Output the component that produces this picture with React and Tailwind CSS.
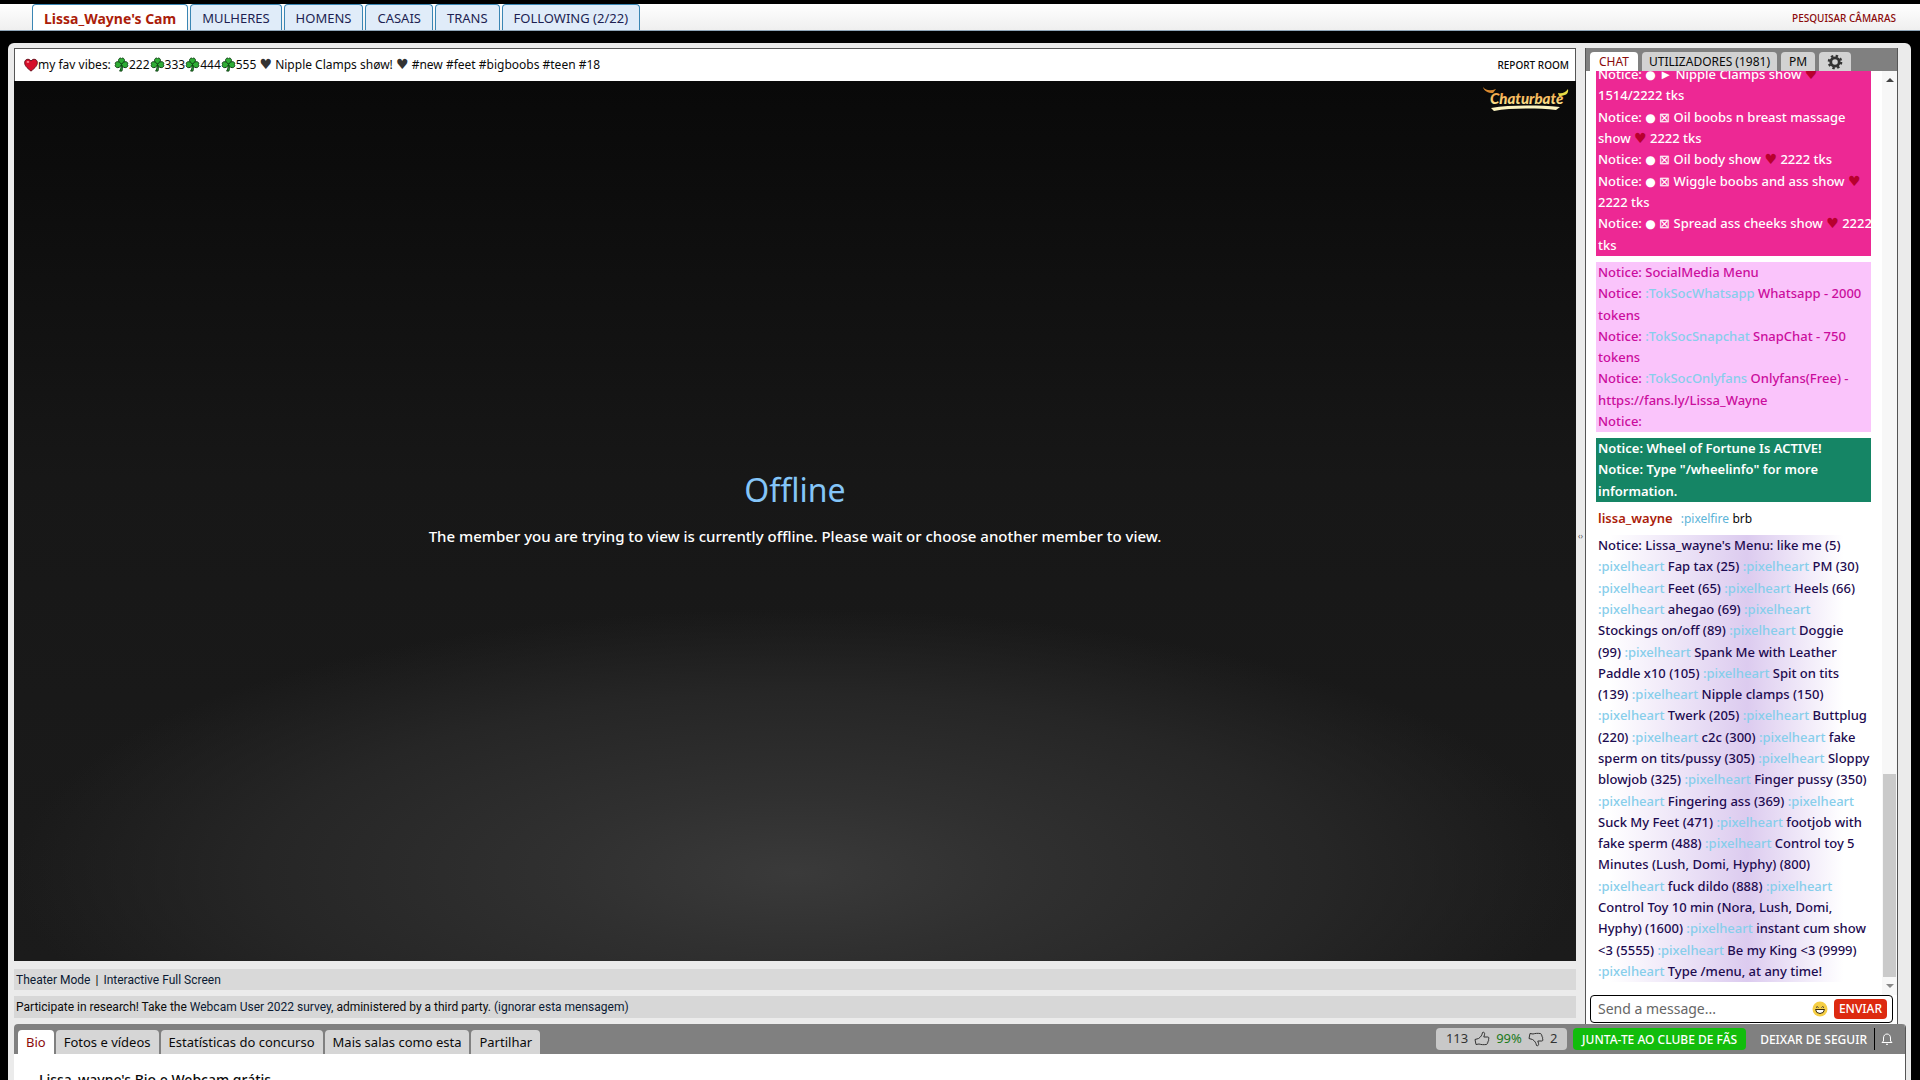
import React, { useState } from 'react';

const mainTabs = ['MULHERES', 'HOMENS', 'CASAIS', 'TRANS', 'FOLLOWING (2/22)'];
const bioTabs = ['Bio', 'Fotos e vídeos', 'Estatísticas do concurso', 'Mais salas como esta', 'Partilhar'];

const pinkLines = [
  'Notice: ● ► Nipple Clamps show ♥',
  '1514/2222 tks',
  'Notice: ● ⊠ Oil boobs n breast massage',
  'show ♥ 2222 tks',
  'Notice: ● ⊠ Oil body show ♥ 2222 tks',
  'Notice: ● ⊠ Wiggle boobs and ass show ♥',
  '2222 tks',
  'Notice: ● ⊠ Spread ass cheeks show ♥ 2222',
  'tks',
];

const socialLines = [
  'Notice: SocialMedia Menu',
  'Notice: :TokSocWhatsapp Whatsapp - 2000',
  'tokens',
  'Notice: :TokSocSnapchat SnapChat - 750',
  'tokens',
  'Notice: :TokSocOnlyfans Onlyfans(Free) -',
  'https://fans.ly/Lissa_Wayne',
  'Notice:',
];

const wheelLines = [
  'Notice: Wheel of Fortune Is ACTIVE!',
  'Notice: Type "/wheelinfo" for more',
  'information.',
];

const menuLines = [
  "Notice: Lissa_wayne's Menu: like me (5)",
  ':pixelheart Fap tax (25) :pixelheart PM (30)',
  ':pixelheart Feet (65) :pixelheart Heels (66)',
  ':pixelheart ahegao (69) :pixelheart',
  'Stockings on/off (89) :pixelheart Doggie',
  '(99) :pixelheart Spank Me with Leather',
  'Paddle x10 (105) :pixelheart Spit on tits',
  '(139) :pixelheart Nipple clamps (150)',
  ':pixelheart Twerk (205) :pixelheart Buttplug',
  '(220) :pixelheart c2c (300) :pixelheart fake',
  'sperm on tits/pussy (305) :pixelheart Sloppy',
  'blowjob (325) :pixelheart Finger pussy (350)',
  ':pixelheart Fingering ass (369) :pixelheart',
  'Suck My Feet (471) :pixelheart footjob with',
  'fake sperm (488) :pixelheart Control toy 5',
  'Minutes (Lush, Domi, Hyphy) (800)',
  ':pixelheart fuck dildo (888) :pixelheart',
  'Control Toy 10 min (Nora, Lush, Domi,',
  'Hyphy) (1600) :pixelheart instant cum show',
  '<3 (5555) :pixelheart Be my King <3 (9999)',
  ':pixelheart Type /menu, at any time!',
];

// emoticon codes are light blue, hearts are red
const ChatLine = ({ text }) => (
  <p className="flex items-center whitespace-pre">
    <span>
      {text.split(/(:pixelheart|:TokSoc\w+|♥|●)/).map((part, i) => {
        if (part === '♥') return <span key={i} className="font-['DejaVu_Sans',sans-serif] text-sm leading-none font-normal text-[#b8002e]">♥</span>;
        if (part === '●') return <span key={i} className="font-['DejaVu_Sans',sans-serif] text-xs leading-none font-normal">●</span>;
        if (part[0] === ':' && part.length > 2) return <span key={i} className="text-[#87ceeb]">{part}</span>;
        return part;
      })}
    </span>
  </p>
);

const ChatBlock = ({ lines, className }) => (
  <div className={`grid auto-rows-fr shrink-0 pl-[2px] ${className}`}>
    {lines.map((line, i) => <ChatLine key={i} text={line} />)}
  </div>
);

const Clover = () => (
  <svg className="inline-block h-[15px] w-[15px] align-[-3px]" viewBox="0 0 16 16">
    <g fill="#2fae35" stroke="#0b3d10" strokeWidth="1">
      <path d="M7.5 9c0 3-.5 4.500-1.500 6h2.500c.6-2 .6-4 .3-6z" />
      <path d="M8 7.500C5 6 4 3.500 5.500 1.800 6.500.8 7.500 1 8 1.800c.5-.8 1.500-1 2.500 0C12 3.500 11 6 8 7.500z" />
      <path d="M8 8c-1 3-3.500 4-5.500 3C1 10 1 9 1.800 8.200 1 7.200 1.200 5.800 2.600 5.200 4.800 4.500 6.800 5.500 8 8z" />
      <path d="M8 8c1 3 3.500 4 5.500 3 1.500-1 1.500-2 .7-2.800.8-1 .6-2.400-.8-3C11.200 4.500 9.200 5.500 8 8z" />
    </g>
  </svg>
);

const RedHeart = () => (
  <svg className="inline-block h-[14px] w-[14px] align-[-3px]" viewBox="0 0 16 16">
    <path d="M8 15C3 11 .7 8.500.7 5.200.7 1.500 5.500-.2 8 3.500c2.500-3.700 7.300-2 7.300 1.700C15.300 8.500 13 11 8 15z" fill="#d6102b" stroke="#5c0612" />
    <ellipse cx="4.500" cy="4.500" rx="1.500" ry="1" fill="#ff8d98" />
  </svg>
);

const DarkHeart = () => (
  <span className="font-['DejaVu_Sans',sans-serif] text-sm leading-none text-[#333]">♥</span>
);

const Logo = () => (
  <svg className="h-[28px] w-[88px]" viewBox="0 0 88 28">
    <defs>
      <linearGradient id="gold" x1="0" y1="0" x2="0" y2="1">
        <stop offset="0" stopColor="#ef8a2b" />
        <stop offset="1" stopColor="#fdf6a0" />
      </linearGradient>
    </defs>
    <path d="M1 2c3 4 8 4 13 2l-3 4C6 8 2 6 1 2z" fill="#d9892f" />
    <path d="M76 8c4 1 7 0 10-4 1 5-3 7-9 7z" fill="#e8dc45" />
    <path d="M9 23c20-3 45-3 69-1l-4 3c-20-2-45-2-62 1z" fill="#fbf3c0" />
    <text x="8" y="19" fontFamily="Lato" fontStyle="italic" fontWeight="900" fontSize="15" fill="url(#gold)">Chaturbate</text>
  </svg>
);

const thumbPath = 'M1 8.500 4.500 7.500C7 6 8 4 8.500 1.500c1.500-.8 2.500.5 2 2.200L9.800 6h4c1.600.2 1.500 1.900.3 2.100 1 .4.900 1.800-.3 2 .7.500.5 1.700-.6 1.800.4.700 0 1.600-1 1.600-2.500.3-5 .2-7.200-.5L2 13.500z';

const Thumb = ({ down }) => (
  <svg className={`h-4 w-4 ${down ? '-scale-y-100' : ''}`} viewBox="0 0 16 16" fill="none" stroke="#333" strokeWidth="1">
    <path d={thumbPath} />
  </svg>
);

const App = () => {
  const [message, setMessage] = useState('');
  const [activeTab, setActiveTab] = useState('Bio');

  return (
    <div className="flex h-screen flex-col overflow-hidden bg-black pt-1 font-['Noto_Sans',sans-serif] text-[#0a0a0a]">
      {/* Top navigation */}
      <nav className="flex h-[27px] shrink-0 items-end justify-between border-b border-[#8fa5b8] bg-linear-to-b from-white to-[#efefef] pr-6 pl-8">
        <div className="flex h-full gap-[2px] text-[13px]">
          <a href="#cam" className="flex items-center rounded-t border border-b-0 border-[#3a86b4] bg-white px-[11px] pt-[2px] text-sm font-bold text-[#ab1d0a]">
            Lissa_Wayne's Cam
          </a>
          {mainTabs.map((tab) => (
            <a key={tab} href="#tab" className="flex items-center rounded-t border border-b-0 border-[#3a86b4] bg-[#e0ecf9] px-[11px] pt-[2px] text-[#1d1f52]">
              {tab}
            </a>
          ))}
        </div>
        <a href="#search" className="self-center pt-[2px] text-[10px] font-medium text-[#8b0a0a]">PESQUISAR CÂMARAS</a>
      </nav>

      <main className="mt-3 mr-[9px] ml-2 flex min-h-0 flex-1 flex-col rounded-t-md bg-[#ebebeb] pt-[5px] pr-[5px] pl-[6px]">
        <div className="flex min-h-0 flex-1">
          {/* Room */}
          <section className="flex min-w-0 flex-1 flex-col">
            <div className="flex h-[33px] shrink-0 items-center justify-between border border-b-0 border-[#555] bg-white pr-[6px] pl-[9px]">
              <h1 className="text-xs leading-5">
                <RedHeart />my fav vibes: <Clover />222<Clover />333<Clover />444<Clover />555 <DarkHeart /> Nipple Clamps shøw! <DarkHeart /> #new #feet #bigboobs #teen #18
              </h1>
              <a href="#report" className="text-[10px] font-medium">REPORT ROOM</a>
            </div>
            <div className="relative flex flex-1 flex-col items-center justify-center bg-[radial-gradient(ellipse_50%_30%_at_50%_90%,#3a3a3a,#303030_30%,#262626_68%,transparent),linear-gradient(#090909,#171717_45%,#191919_70%,#1b1b1b)] pb-6">
              <div className="absolute top-1 right-[6px]">
                <Logo />
              </div>
              <h2 className="text-[32px] leading-10 text-[#84c5f8]">Offline</h2>
              <p className="mt-[14px] text-[15px] leading-6 font-medium text-white">
                The member you are trying to view is currently offline. Please wait or choose another member to view.
              </p>
            </div>
            <div className="mt-2 flex h-[21px] shrink-0 items-center gap-[5px] bg-[#d9d9d9] px-[2px] font-[Roboto,sans-serif] text-xs">
              <a href="#theater" className="text-[#0b1a33]">Theater Mode</a>|<a href="#full" className="text-[#0b1a33]">Interactive Full Screen</a>
            </div>
            <p className="mt-[6px] mb-[6px] flex h-[22px] shrink-0 items-center bg-[#d7d7d7] px-[2px] font-[Roboto,sans-serif] text-xs whitespace-pre">
              Participate in research! Take the <a href="#survey" className="text-[#0b1a33]">Webcam User 2022 survey,</a> administered by a third party. <a href="#ignore" className="text-[#0b1a33]">(ignorar esta mensagem)</a>
            </p>
          </section>

          <div className="flex w-[9px] shrink-0 items-center justify-center text-[8px] text-[#555]">‹›</div>

          {/* Chat */}
          <aside className="mr-2 flex w-[313px] shrink-0 flex-col border-x border-[#555] bg-white">
            <div className="flex h-[23px] shrink-0 items-end gap-1 bg-[#808080] pl-1 text-xs">
              <button className="h-[19px] rounded-t bg-white px-[9px] text-[#8b0a0a]">CHAT</button>
              <button className="h-[19px] rounded-t bg-[#d2d2d2] px-[7px]">UTILIZADORES (1981)</button>
              <button className="h-[19px] rounded-t bg-[#d2d2d2] px-2">PM</button>
              <button className="flex h-[19px] items-center rounded-t bg-[#d2d2d2] px-2" aria-label="Settings">
                <svg className="h-4 w-4" viewBox="0 0 16 16">
                  <circle cx="8" cy="8" r="4.200" fill="none" stroke="#333" strokeWidth="2.800" />
                  <circle cx="8" cy="8" r="6.200" fill="none" stroke="#333" strokeWidth="2.200" strokeDasharray="2.430 2.430" />
                </svg>
              </button>
            </div>
            <div className="flex min-h-0 flex-1">
              <div className="flex min-w-0 flex-1 flex-col justify-end gap-[6px] overflow-hidden pb-[13px] pl-[10px] text-[13px] leading-[21px]">
                <ChatBlock lines={pinkLines} className="h-[192px] bg-[#ed2894] font-medium text-white" />
                <ChatBlock lines={socialLines} className="h-[170px] bg-[#fac4fb] font-medium text-[#cb0d9d]" />
                <ChatBlock lines={wheelLines} className="h-16 bg-[#158565] font-semibold text-white" />
                <p className="pl-[2px]">
                  <span className="font-semibold text-[#ab1d0a]">lissa_wayne</span>
                  <span className="ml-2 text-xs text-[#5db4d8]">:pixelfire</span> <span className="text-xs">brb</span>
                </p>
                <ChatBlock lines={menuLines} className="h-[447px] bg-linear-to-r from-white from-5% via-[#dccbef] via-55% to-white to-90% font-medium text-[#1d0b50]" />
              </div>
              <div className="ml-[11px] flex w-[15px] shrink-0 flex-col items-center bg-[#f7f7f7] py-[7px]">
                <svg className="h-1 w-2" viewBox="0 0 8 4"><path d="M0 4 4 0l4 4z" fill="#444" /></svg>
                <div className="mt-auto mb-[7px] h-[203px] w-[13px] bg-[#cacaca]" />
                <svg className="h-1 w-2" viewBox="0 0 8 4"><path d="M0 0h8L4 4z" fill="#888" /></svg>
              </div>
            </div>
            <form className="mx-1 mb-px flex h-7 shrink-0 items-center rounded border border-black px-[5px]" onSubmit={(e) => e.preventDefault()}>
              <input
                aria-label="Message"
                className="min-w-0 flex-1 pl-[2px] text-sm outline-none placeholder:text-[#666]"
                placeholder="Send a message..."
                value={message}
                onChange={(e) => setMessage(e.target.value)}
              />
              <svg className="mr-[6px] h-4 w-4" viewBox="0 0 16 16">
                <circle cx="8" cy="8" r="7.500" fill="#f6cf45" />
                <path d="M4 6.500q1-1.500 2.500 0M9.500 6.500q1-1.500 2.500 0M3.500 8.500h9q-.5 4-4.500 4t-4.500-4z" fill="#fff" stroke="#3a2a0a" />
              </svg>
              <button className="h-5 rounded bg-[#dd2a10] px-[5px] text-xs leading-5 font-medium text-white">ENVIAR</button>
            </form>
          </aside>
        </div>

        {/* Bio */}
        <section className="h-14 shrink-0 overflow-hidden rounded-t border-r border-[#555] bg-white">
          <div className="flex h-[30px] items-end justify-between bg-[#808080] pl-1">
            <div className="flex gap-[2px] text-[13px]">
              {bioTabs.map((tab) => (
                <button
                  key={tab}
                  onClick={() => setActiveTab(tab)}
                  className={`h-6 rounded-t px-2 pt-[2px] ${activeTab === tab ? 'bg-white text-[#8b0a0a]' : 'bg-[#d6d6d6]'}`}
                >
                  {tab}
                </button>
              ))}
            </div>
            <div className="mb-1 flex h-[22px] items-center text-[13px]">
              <div className="flex h-full w-[131px] items-center justify-center gap-[6px] rounded bg-[#c8c8c8] text-[#333]">
                113 <Thumb /> <span className="text-[#1b7a1b]">99%</span> <Thumb down /> 2
              </div>
              <button className="ml-[6px] h-full rounded-sm bg-[#12bd0c] px-[9px] pt-px text-xs font-medium text-white">JUNTA-TE AO CLUBE DE FÃS</button>
              <button className="h-full pt-px pr-[7px] pl-[14px] text-xs font-medium text-white">DEIXAR DE SEGUIR</button>
              <button className="flex h-full items-center border-l border-black pr-3 pl-[6px]" aria-label="Notifications">
                <svg className="h-3 w-3" viewBox="0 0 12 12" fill="none" stroke="#fff">
                  <path d="M1 9.500h10L9.500 8V5C9.500 2.500 8 1 6 1S2.500 2.500 2.500 5v3zM5 11.300h2" />
                </svg>
              </button>
            </div>
          </div>
          <h2 className="mt-4 ml-[25px] text-sm font-medium">Lissa_wayne's Bio e Webcam grátis</h2>
        </section>
      </main>
    </div>
  );
};

export default App;
